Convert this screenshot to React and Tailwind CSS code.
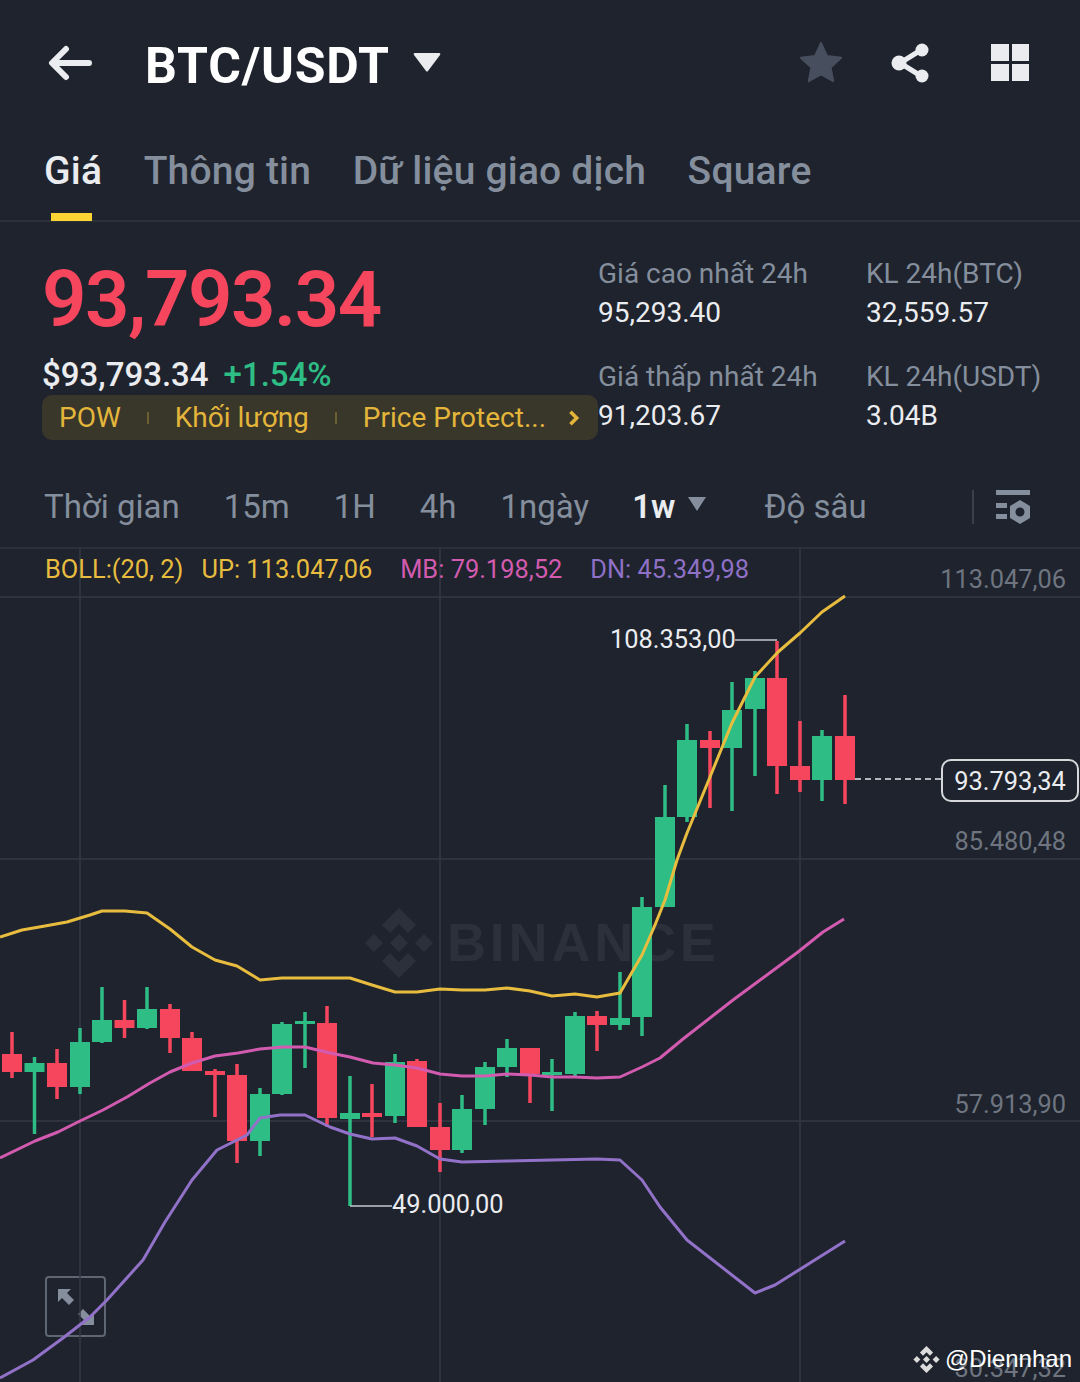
import { useState } from "react";

const UP = "#2ebd85";
const DOWN = "#f6465d";

// [x, wickTop, wickBottom, bodyTop, bodyBottom, color]
const candles = [
  [12, 1032, 1078, 1054, 1072, DOWN],
  [34.5, 1057, 1134, 1063, 1072, UP],
  [57, 1049, 1099, 1063, 1087, DOWN],
  [80, 1028, 1094, 1042, 1087, UP],
  [102, 987, 1043, 1020, 1042, UP],
  [124.5, 1000, 1038, 1020, 1028, DOWN],
  [147, 987, 1029, 1009, 1028, UP],
  [170, 1004, 1053, 1009, 1038, DOWN],
  [192, 1032, 1071, 1038, 1071, DOWN],
  [215, 1069, 1117, 1071, 1075, DOWN],
  [237, 1064, 1163, 1075, 1141, DOWN],
  [260, 1088, 1156, 1094, 1141, UP],
  [282, 1022, 1095, 1024, 1094, UP],
  [305, 1012, 1068, 1021, 1024, UP],
  [327, 1006, 1127, 1023, 1118, DOWN],
  [350, 1076, 1206, 1113, 1119, UP],
  [372, 1084, 1137, 1113, 1117, DOWN],
  [395, 1054, 1123, 1062, 1116, UP],
  [417, 1059, 1127, 1061, 1127, DOWN],
  [440, 1103, 1172, 1127, 1150, DOWN],
  [462, 1095, 1153, 1109, 1150, UP],
  [485, 1062, 1125, 1067, 1109, UP],
  [507, 1039, 1077, 1048, 1067, UP],
  [530, 1048, 1103, 1048, 1074, DOWN],
  [552, 1059, 1111, 1072, 1075, UP],
  [575, 1012, 1077, 1016, 1074, UP],
  [597, 1011, 1051, 1016, 1025, DOWN],
  [620, 972, 1030, 1018, 1025, UP],
  [642, 897, 1036, 907, 1017, UP],
  [665, 785, 907, 817, 907, UP],
  [687, 724, 822, 740, 817, UP],
  [710, 731, 808, 740, 748, DOWN],
  [732, 682, 811, 710, 748, UP],
  [755, 671, 776, 678, 709, UP],
  [777, 641, 794, 678, 766, DOWN],
  [800, 721, 792, 766, 780, DOWN],
  [822, 730, 801, 736, 780, UP],
  [845, 695, 804, 736, 780, DOWN],
];

const upperBand =
  "0,937 22,930 45,926 67,922 90,915 102,911 125,911 147,913 170,929 192,947 215,960 237,966 260,980 282,978 305,978 327,978 350,978 372,985 395,992 417,992 440,989 462,990 485,990 507,988 530,991 552,996 575,994 597,997 620,993 642,955 655,925 665,900 677,860 687,833 710,777 732,723 755,677 778,652 800,633 822,612 845,596";
const middleBand =
  "0,1158 35,1141 58,1132 80,1121 103,1110 127,1097 150,1083 170,1072 192,1063 215,1056 238,1053 260,1049 283,1047 305,1047 330,1053 350,1057 373,1063 395,1065 417,1068 440,1074 462,1076 485,1076 507,1074 530,1075 552,1077 575,1077 597,1078 620,1077 642,1067 660,1058 683,1039 733,1000 798,952 823,932 844,919";
const lowerBand =
  "0,1378 33,1360 63,1338 90,1317 107,1300 143,1260 165,1222 192,1180 217,1150 247,1135 260,1118 280,1115 305,1115 330,1127 350,1134 372,1139 395,1138 417,1146 440,1159 462,1162 507,1161 552,1160 597,1159 620,1160 642,1180 660,1207 687,1240 755,1293 775,1285 845,1241";

function BinanceLogo({ className, color }) {
  return (
    <svg viewBox="0 0 70 70" className={className} fill={color}>
      <path d="M35 0 L52 17 L44 25 L35 16 L26 25 L18 17 Z" />
      <path d="M35 70 L52 53 L44 45 L35 54 L26 45 L18 53 Z" />
      <path d="M10 26 L19 35 L10 44 L1 35 Z" />
      <path d="M60 26 L69 35 L60 44 L51 35 Z" />
      <path d="M35 26 L44 35 L35 44 L26 35 Z" />
    </svg>
  );
}

function Header() {
  return (
    <div className="flex h-[125px] items-center pl-[48px] pr-[51px]">
      <svg viewBox="0 0 44 36" className="h-[36px] w-[44px]" fill="none" stroke="#eaecef" strokeWidth="6" strokeLinecap="round" strokeLinejoin="round">
        <path d="M41 18 H5 M18 4 L4 18 L18 32" />
      </svg>
      <span className="mt-[6px] ml-[53px] text-[50px] leading-none font-bold tracking-[0.8px] text-white">BTC/USDT</span>
      <svg viewBox="0 0 28 20" className="ml-[23px] mb-[2px] h-[20px] w-[28px]" fill="#eaecef">
        <path d="M2 1 H26 Q28 1 27 3 L15 19 Q14 20 13 19 L1 3 Q0 1 2 1 Z" />
      </svg>
      <div className="ml-auto flex items-center">
        <svg viewBox="0 0 24 24" className="mb-[2px] h-[46px] w-[46px]" fill="#474f5f" stroke="#474f5f" strokeWidth="1" strokeLinejoin="round">
          <path d="M12 2 L15.100 8.800 L22.500 9.800 L17 14.900 L18.400 22 L12 18.500 L5.600 22 L7 14.900 L1.500 9.800 L8.900 8.800 Z" />
        </svg>
        <svg viewBox="0 0 42 44" className="ml-[46px] h-[44px] w-[42px]" fill="#eaecef" stroke="#eaecef" strokeWidth="5">
          <path d="M31 9 L10 22 L31 35" fill="none" />
          <circle cx="32" cy="9" r="6.500" stroke="none" />
          <circle cx="9" cy="22" r="7.500" stroke="none" />
          <circle cx="32" cy="35" r="6.500" stroke="none" />
        </svg>
        <div className="ml-[59px] grid h-[38px] w-[38px] grid-cols-2 grid-rows-[17px_17px] gap-[3px]">
          <div className="bg-[#eaecef]" />
          <div className="bg-[#eaecef]" />
          <div className="bg-[#eaecef]" />
          <div className="bg-[#eaecef]" />
        </div>
      </div>
    </div>
  );
}

function Tabs({ active, onChange }) {
  const tabs = ["Giá", "Thông tin", "Dữ liệu giao dịch", "Square"];
  return (
    <div className="flex h-[97px] gap-[41.5px] border-b-2 border-[#2b3039] pl-[44px] pt-[22px]">
      {tabs.map((tab, i) => (
        <button key={tab} onClick={() => onChange(i)} className={`relative h-[48px] text-[39px] leading-[48px] font-medium tracking-[0.2px] ${i === active ? "text-[#eaecef]" : "text-[#848e9c]"}`}>
          {tab}
          {i === active && <span className="absolute top-[66px] left-[7px] h-[8px] w-[41px] bg-[#fcd535]" />}
        </button>
      ))}
    </div>
  );
}

function Stat({ label, value }) {
  return (
    <div className="flex h-[103px] flex-col">
      <span className="text-[28px] leading-[36px] whitespace-nowrap text-[#848e9c]">{label}</span>
      <span className="mt-[3px] text-[28px] leading-[36px] text-[#eaecef]">{value}</span>
    </div>
  );
}

function PriceBlock() {
  return (
    <div className="flex h-[247px]">
      <div className="w-[598px] pl-[42px]">
        <div className="mt-[36px] text-[78px] leading-[84px] font-semibold tracking-[-1.5px] text-[#f6465d]">93,793.34</div>
        <div className="mt-[13px] flex h-[40px] items-center text-[33px] font-medium">
          <span className="text-[#eaecef]">$93,793.34</span>
          <span className="ml-[15px] text-[#2ebd85]">+1.54%</span>
        </div>
        <div className="flex h-[45px] w-[556px] items-center rounded-[10px] bg-[#39362a] pl-[17px] text-[28px] text-[#e3b53a]">
          <span>POW</span>
          <span className="ml-[26px] h-[12px] w-[2px] bg-[#6b5f30]" />
          <span className="ml-[26px]">Khối lượng</span>
          <span className="ml-[26px] h-[12px] w-[2px] bg-[#6b5f30]" />
          <span className="ml-[26px]">Price Protect...</span>
          <svg viewBox="0 0 12 18" className="ml-[22px] h-[16px] w-[12px]" fill="none" stroke="#e3b53a" strokeWidth="4">
            <path d="M2 2 L9 9 L2 16" />
          </svg>
        </div>
      </div>
      <div className="w-[268px] pt-[34px]">
        <Stat label="Giá cao nhất 24h" value="95,293.40" />
        <Stat label="Giá thấp nhất 24h" value="91,203.67" />
      </div>
      <div className="flex-1 pt-[34px]">
        <Stat label="KL 24h(BTC)" value="32,559.57" />
        <Stat label="KL 24h(USDT)" value="3.04B" />
      </div>
    </div>
  );
}

function Intervals() {
  return (
    <div className="flex h-[80px] items-center border-b-2 border-[#2b3039] pb-[2px] pl-[44px] pr-[50px] text-[33px] text-[#848e9c]">
      <span>Thời gian</span>
      <span className="ml-[44px]">15m</span>
      <span className="ml-[44px]">1H</span>
      <span className="ml-[44px]">4h</span>
      <span className="ml-[44px]">1ngày</span>
      <span className="ml-[43px] font-semibold text-[#eaecef]">1w</span>
      <svg viewBox="0 0 18 14" className="mb-[6px] ml-[13px] h-[14px] w-[18px]" fill="#848e9c">
        <path d="M0 0 H18 L9 14 Z" />
      </svg>
      <span className="ml-[58px]">Độ sâu</span>
      <div className="ml-auto h-[34px] w-[2px] bg-[#3a404a]" />
      <svg viewBox="0 0 34 34" className="ml-[22px] h-[34px] w-[34px]" fill="#848e9c">
        <rect x="0" y="0" width="34" height="5" />
        <rect x="0" y="13" width="11" height="5" />
        <rect x="0" y="24" width="11" height="5" />
        <path fillRule="evenodd" d="M24 10 L34 16 V28 L24 34 L14 28 V16 Z M24 17.500 A4.500 4.500 0 1 0 24 26.500 A4.500 4.500 0 1 0 24 17.500 Z" />
      </svg>
    </div>
  );
}

function Chart() {
  return (
    <div className="relative flex-1 overflow-hidden font-['Roboto',sans-serif]">
      {/* watermark and expand button sit below the candles and bands */}
      <BinanceLogo className="absolute top-[359px] left-[364px] h-[70px] w-[70px]" color="#2b303a" />
      <span className="absolute top-[362px] left-[447px] font-['Liberation_Sans',sans-serif] text-[54px] leading-[62px] font-bold tracking-[3.8px] text-[#2b303a]">BINANCE</span>
      <div className="absolute top-[727px] left-[45px] flex h-[61px] w-[61px] items-center justify-center rounded-[4px] border-2 border-[#5f6673]">
        <svg viewBox="0 0 36 36" className="h-[36px] w-[36px]" fill="#848e9c">
          <path d="M0 0 H13 L9 4 L16 11 L11 16 L4 9 L0 13 Z" />
          <path d="M36 36 H23 L27 32 L20 25 L25 20 L32 27 L36 23 Z" />
        </svg>
      </div>

      <svg viewBox="0 549 1080 833" className="absolute inset-0 h-full w-full">
        <g stroke="#343a45" strokeWidth="1.500">
          <path d="M0 597 H1080 M0 859 H1080 M0 1121 H1080" />
          <path d="M80 549 V1382 M440 549 V1382 M800 549 V1382" />
        </g>
        {candles.map(([x, wickTop, wickBottom, bodyTop, bodyBottom, color]) => (
          <g key={x} fill={color}>
            <rect x={x - 1.75} y={wickTop} width="3.5" height={wickBottom - wickTop} />
            <rect x={x - 10} y={bodyTop} width="20" height={bodyBottom - bodyTop} />
          </g>
        ))}
        <path d="M735 640 H777" stroke="#c4c7cc" strokeWidth="1.500" fill="none" />
        <path d="M350 1206 H392" stroke="#c4c7cc" strokeWidth="1.500" fill="none" />
        <path d="M855 779 H941" stroke="#e6e8ea" strokeWidth="1.500" strokeDasharray="6 4" fill="none" />
        <polyline points={upperBand} fill="none" stroke="#e8bd3f" strokeWidth="3" strokeLinejoin="round" />
        <polyline points={middleBand} fill="none" stroke="#d25bb0" strokeWidth="3" strokeLinejoin="round" />
        <polyline points={lowerBand} fill="none" stroke="#9272c8" strokeWidth="3" strokeLinejoin="round" />
      </svg>

      <div className="relative flex h-[41px] items-center pl-[45px] text-[25.4px] whitespace-nowrap">
        <span className="text-[#e8bd3f]">BOLL:(20, 2)</span>
        <span className="ml-[18px] text-[#e8bd3f]">UP: 113.047,06</span>
        <span className="ml-[28px] text-[#d25bb0]">MB: 79.198,52</span>
        <span className="ml-[28px] text-[#8e71c6]">DN: 45.349,98</span>
      </div>

      <span className="absolute top-[14px] right-[14px] text-[25.4px] leading-[32px] text-[#6e7580]">113.047,06</span>
      <span className="absolute top-[276px] right-[14px] text-[25.4px] leading-[32px] text-[#6e7580]">85.480,48</span>
      <span className="absolute top-[539px] right-[14px] text-[25.4px] leading-[32px] text-[#6e7580]">57.913,90</span>
      <span className="absolute top-[803px] right-[14px] text-[25.4px] leading-[32px] text-[#6e7580]">30.347,32</span>

      <span className="absolute top-[74px] left-[610px] text-[25.4px] leading-[32px] text-[#eaecef]">108.353,00</span>
      <span className="absolute top-[639px] left-[392px] text-[25.4px] leading-[32px] text-[#eaecef]">49.000,00</span>

      <div className="absolute top-[210px] left-[941px] flex h-[43px] w-[138px] items-center justify-center rounded-[10px] border-2 border-[#d5d7da] bg-[#1e232d] pt-[1px] text-[25.4px] text-[#eaecef]">
        93.793,34
      </div>

      <div className="absolute right-[8px] bottom-[9px] flex items-center font-['Liberation_Sans',sans-serif] text-[24px] leading-[28px] text-white">
        <BinanceLogo className="mr-[5px] h-[27px] w-[27px]" color="#dcdcdc" />
        <span>@Diennhan</span>
      </div>
    </div>
  );
}

export default function App() {
  const [tab, setTab] = useState(0);

  return (
    <div className="flex h-[1382px] w-[1080px] flex-col overflow-hidden bg-[#1e232d] font-['Roboto',sans-serif]">
      <Header />
      <Tabs active={tab} onChange={setTab} />
      <PriceBlock />
      <Intervals />
      <Chart />
    </div>
  );
}
